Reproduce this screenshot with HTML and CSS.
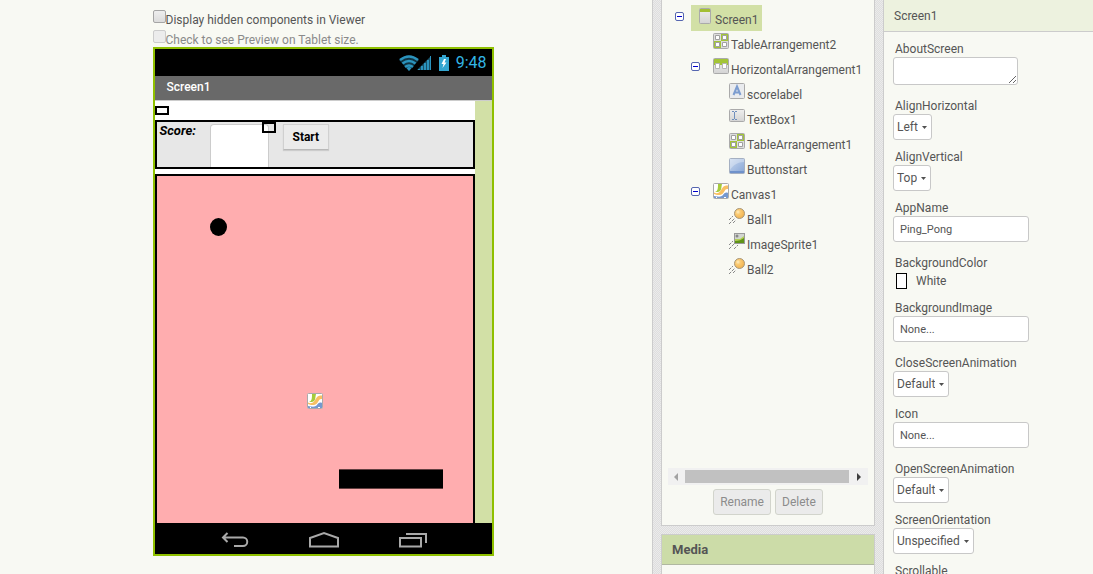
FILE: index.html
```html
<!DOCTYPE html>
<html lang="en">
<head>
  <meta charset="UTF-8" />
  <meta name="viewport" content="width=device-width, initial-scale=1.0" />
  <title>Ping_Pong - Designer</title>
  <link rel="stylesheet" href="styles.css">
</head>
<body>
  <!-- component icons, used by the tree and the canvas -->
  <svg class="sprite" aria-hidden="true">
    <defs>
      <linearGradient id="grey" x1="0" y1="0" x2="0" y2="1"><stop offset="0" stop-color="#eee"/><stop offset="1" stop-color="#d4d4d4"/></linearGradient>
      <linearGradient id="blue" x1="0" y1="0" x2="1" y2="1"><stop offset="0" stop-color="#c8d8ee"/><stop offset="1" stop-color="#86a5d6"/></linearGradient>
      <radialGradient id="orange" cx=".35" cy=".35" r=".7"><stop offset="0" stop-color="#ffeec0"/><stop offset=".35" stop-color="#fbcb73"/><stop offset="1" stop-color="#f0b04c"/></radialGradient>
    </defs>
    <symbol id="i-screen" viewBox="0 0 16 16">
      <rect x="2.5" y=".5" width="11" height="15" rx="1" fill="url(#grey)" stroke="#aaa"/>
      <path d="M3 1h10v3H3z" fill="#a3bf35"/>
    </symbol>
    <symbol id="i-table" viewBox="0 0 16 16">
      <rect x=".5" y=".5" width="15" height="15" rx="1" fill="#ddd" stroke="#aaa"/>
      <path d="M8 1h7v7H8zM1 8h7v7H1z" fill="#a3c537"/>
      <g fill="#fff" stroke="#a0a0a0"><path d="M2.500 2.500h4v4h-4zM9.500 2.500h4v4h-4zM2.500 9.500h4v4h-4zM9.500 9.500h4v4h-4z"/></g>
    </symbol>
    <symbol id="i-horizontal" viewBox="0 0 16 16">
      <rect x=".5" y=".5" width="15" height="15" rx="1" fill="url(#grey)" stroke="#aaa"/>
      <path d="M1 1h14v6H1z" fill="#a3c537"/>
      <path d="M2.500 5.500h4v5h-4zM9.500 5.500h4v5h-4z" fill="#fff" stroke="#b5b5b5"/>
    </symbol>
    <symbol id="i-label" viewBox="0 0 16 16">
      <rect x=".5" y=".5" width="15" height="15" rx="1" fill="#e9ebee" stroke="#aaa"/>
      <path d="M4.500 12 8 3.500 11.500 12M6 9.500h4" fill="none" stroke="#7d9dd0" stroke-width="2"/>
    </symbol>
    <symbol id="i-textbox" viewBox="0 0 16 16">
      <rect x=".5" y="1.500" width="15" height="12" rx="1" fill="url(#grey)" stroke="#aaa"/>
      <path d="M3 3.500h2M6 3.500h2M3 11.500h2M6 11.500h2M5.500 4v7" fill="none" stroke="#6f8fbd"/>
    </symbol>
    <symbol id="i-button" viewBox="0 0 16 16">
      <rect x=".5" y=".5" width="15" height="15" rx="1" fill="url(#blue)" stroke="#a5b0c2"/>
      <path d="M1 1h14v3C9 4 4 7 1 12z" fill="#fff" opacity=".3"/>
      <path d="M1 13h14v2H1z" fill="#6f92cb"/>
    </symbol>
    <symbol id="i-canvas" viewBox="0 0 16 16">
      <rect x=".5" y=".5" width="15" height="15" rx="1" fill="#fff" stroke="#aaa"/>
      <path d="M5 1h4c-1 4 0 7-4 8H2c3-1 3-4 3-8z" fill="#a6cb3c"/>
      <path d="M1 9.500c5 2 6-1 8-4s3-3 6-3v3.500c-4-1-3 5-8 6-2 0-4 0-6-1z" fill="#f8c063"/>
      <path d="M1 15v-2c5 1 7 1 9-1 1-2 3-3 5-2v5z" fill="#7598cf"/>
      <path d="M3 14h1v1H3zM11 14h2v1h-2z" fill="#fff"/>
    </symbol>
    <symbol id="i-ball" viewBox="0 0 16 16">
      <path d="m0 12 4-4M0 16l6-6M4 15l3-3" stroke="#888" stroke-dasharray="3 1" fill="none"/>
      <circle cx="10.500" cy="5.500" r="5" fill="url(#orange)" stroke="#a6977b"/>
    </symbol>
    <symbol id="i-sprite" viewBox="0 0 16 16">
      <path d="m0 12 4-4M0 16l6-6M5 16l4-4" stroke="#888" stroke-dasharray="3 1" fill="none"/>
      <rect x="5.500" y=".5" width="10" height="10" fill="#b3cf57" stroke="#999"/>
      <path d="M6 1h9v2l-4 3H6z" fill="#d2d6cf"/>
      <path d="M6 8c4 0 6-1 9-3v5H6z" fill="#5f9417"/>
      <circle cx="8" cy="3" r="1.500" fill="#888"/>
    </symbol>
  </svg>

  <div class="designer">
    <main class="viewer">
      <div class="viewer-inner">
        <label class="check"><input type="checkbox">Display hidden components in Viewer</label>
        <label class="check disabled"><input type="checkbox" disabled>Check to see Preview on Tablet size.</label>

        <div class="phone">
          <div class="status-bar">
            <svg width="33" height="16" viewBox="0 0 33 16" aria-hidden="true">
              <path d="M0 5q10-9 20 0l-10 11z" fill="#2b93bd" opacity=".35"/>
              <g fill="none" stroke="#2b93bd" stroke-width="2.500">
                <path d="M1 5q9-7 18 0M3.500 8.500q6.500-5 13 0M6 12q4-3 8 0"/>
              </g>
              <path d="M7.500 13q2.500-2 5 0L10 16z" fill="#2b93bd"/>
              <path d="M19 15v-1h2v1zM22 15v-4h2v4zM25 15V8h2v7zM28 15V5h2v10zM31 15V1h1v14z" fill="#2b93bd"/>
              <path d="M18 15 32 1v14z" fill="#2b93bd" opacity=".55"/>
            </svg>
            <svg width="10" height="16" viewBox="0 0 10 16" aria-hidden="true">
              <path d="M3 0h4v2h3v14H0V2h3z" fill="#33a5d0"/>
              <path d="M5 4 2.500 9h2L3.500 13 7.500 7.500h-2L7 4z" fill="#fff"/>
            </svg>
            <span>9:48</span>
          </div>
          <div class="title-bar">Screen1</div>
          <div class="screen">
            <div class="form">
              <div class="empty-table"></div>
              <div class="arrangement">
                <label class="score" for="score-box">Score:</label>
                <div class="score-box">
                  <input id="score-box" type="text">
                  <div class="empty-table overlay"></div>
                </div>
                <button class="start">Start</button>
              </div>
              <div class="canvas">
                <div class="ball"></div>
                <svg class="canvas-icon" width="16" height="16"><use href="#i-canvas"/></svg>
                <div class="paddle"></div>
              </div>
            </div>
          </div>
          <div class="nav-bar">
            <svg width="28" height="18" viewBox="0 0 28 18" fill="none" stroke="#a9a9a9" stroke-width="2"><path d="M6.500 2 2 6.500 6.500 11M2 6.500h20a4.200 4.200 0 0 1 0 8.500h-9"/></svg>
            <svg width="30" height="18" viewBox="0 0 30 18" fill="none" stroke="#a9a9a9" stroke-width="2"><path d="M1 15.500V7l14-5 14 5v8.500z"/></svg>
            <svg width="28" height="18" viewBox="0 0 28 18" fill="none" stroke="#a9a9a9" stroke-width="2"><path d="M1 7h21v8.500H1zM7 3h20v9"/></svg>
          </div>
        </div>
      </div>
    </main>

    <div class="middle">
      <section class="panel components">
        <ul class="tree">
          <li>
            <div class="node"><button class="toggle" aria-label="Collapse Screen1"></button><a class="selected" href="#"><svg><use href="#i-screen"/></svg>Screen1</a></div>
            <ul>
              <li><div class="node"><a href="#"><svg><use href="#i-table"/></svg>TableArrangement2</a></div></li>
              <li>
                <div class="node"><button class="toggle" aria-label="Collapse HorizontalArrangement1"></button><a href="#"><svg><use href="#i-horizontal"/></svg>HorizontalArrangement1</a></div>
                <ul>
                  <li><div class="node"><a href="#"><svg><use href="#i-label"/></svg>scorelabel</a></div></li>
                  <li><div class="node"><a href="#"><svg><use href="#i-textbox"/></svg>TextBox1</a></div></li>
                  <li><div class="node"><a href="#"><svg><use href="#i-table"/></svg>TableArrangement1</a></div></li>
                  <li><div class="node"><a href="#"><svg><use href="#i-button"/></svg>Buttonstart</a></div></li>
                </ul>
              </li>
              <li>
                <div class="node"><button class="toggle" aria-label="Collapse Canvas1"></button><a href="#"><svg><use href="#i-canvas"/></svg>Canvas1</a></div>
                <ul>
                  <li><div class="node"><a href="#"><svg><use href="#i-ball"/></svg>Ball1</a></div></li>
                  <li><div class="node"><a href="#"><svg><use href="#i-sprite"/></svg>ImageSprite1</a></div></li>
                  <li><div class="node"><a href="#"><svg><use href="#i-ball"/></svg>Ball2</a></div></li>
                </ul>
              </li>
            </ul>
          </li>
        </ul>
        <div class="scrollbar">
          <span class="arrow left"></span>
          <span class="thumb"></span>
          <span class="arrow right"></span>
        </div>
        <div class="actions">
          <button disabled>Rename</button>
          <button disabled>Delete</button>
        </div>
      </section>
      <section class="panel media">
        <h2>Media</h2>
      </section>
    </div>

    <aside class="properties">
      <div class="properties-title">Screen1</div>
      <form>
        <div class="field wide">
          <label for="about">AboutScreen</label>
          <textarea id="about"></textarea>
        </div>
        <div class="field">
          <label for="align-h">AlignHorizontal</label>
          <select id="align-h"><option>Left</option><option>Right</option><option>Center</option></select>
        </div>
        <div class="field">
          <label for="align-v">AlignVertical</label>
          <select id="align-v"><option>Top</option><option>Center</option><option>Bottom</option></select>
        </div>
        <div class="field wide">
          <label for="app-name">AppName</label>
          <input id="app-name" type="text" value="Ping_Pong">
        </div>
        <div class="field">
          <label for="bg-color">BackgroundColor</label>
          <button id="bg-color" class="color" type="button"><span class="swatch"></span>White</button>
        </div>
        <div class="field wide">
          <label for="bg-image">BackgroundImage</label>
          <input id="bg-image" type="text" value="None..." readonly>
        </div>
        <div class="field">
          <label for="close-anim">CloseScreenAnimation</label>
          <select id="close-anim"><option>Default</option><option>Fade</option><option>Zoom</option></select>
        </div>
        <div class="field wide">
          <label for="icon">Icon</label>
          <input id="icon" type="text" value="None..." readonly>
        </div>
        <div class="field">
          <label for="open-anim">OpenScreenAnimation</label>
          <select id="open-anim"><option>Default</option><option>Fade</option><option>Zoom</option></select>
        </div>
        <div class="field">
          <label for="orientation">ScreenOrientation</label>
          <select id="orientation"><option>Unspecified</option><option>Portrait</option><option>Landscape</option></select>
        </div>
        <div class="field">
          <label for="scrollable">Scrollable</label>
          <input id="scrollable" type="checkbox">
        </div>
      </form>
    </aside>
  </div>
</body>
</html>
```
FILE: styles.css
```css
* {
  box-sizing: border-box;
}
body {
  margin: 0;
  font-family: Roboto, "Liberation Sans", sans-serif;
  font-size: 12px;
  line-height: 16px;
  color: #555;
  background: #f8f9f3;
}
button, input, select, textarea {
  font: inherit;
  color: inherit;
  margin: 0;
}
.sprite {
  position: absolute;
  width: 0;
  height: 0;
}
.designer {
  display: grid;
  grid-template-columns: minmax(0, 1fr) 214px 210px;
  gap: 8px;
  height: 100vh;
  overflow: hidden;
  background: repeating-conic-gradient(#dedede 0 25%, #ebebeb 0 50%) 0 0 / 2px 2px;
}

/* viewer */
.viewer {
  display: flex;
  justify-content: center;
  padding: 10px 6px 0 0;
  background: #f8f9f3;
  border-right: 1px solid #ccc;
}
.check {
  display: flex;
  height: 20px;
  line-height: 20px;
}
.check input {
  appearance: none;
  width: 13px;
  height: 13px;
  border: 1px solid #a5a5a5;
  border-radius: 2px;
  background: linear-gradient(#eee, #dcdcdc);
}
.check.disabled {
  height: 17px;
  color: #8a8a8a;
}
.check.disabled input {
  border-color: #ccc;
  background: #ececec;
}
.phone {
  width: 341px;
  border: 2px solid #8fc000;
  background: #000;
}
.status-bar {
  display: flex;
  justify-content: flex-end;
  align-items: center;
  gap: 7px;
  height: 27px;
  padding-right: 5px;
  font-size: 16px;
  color: #33b5e5;
}
.title-bar {
  height: 25px;
  padding: 3px 12px;
  border-bottom: 1px solid #ccc;
  background: #696969;
  color: #fff;
  font-weight: 500;
}
.screen {
  display: flex;
  height: 422px;
  padding-right: 17px;
  background: #d2e0a6;
}
.form {
  flex: 1;
  display: flex;
  flex-direction: column;
  padding-top: 5px;
  gap: 5px;
  background: #fff;
}
.empty-table {
  width: 14px;
  height: 9px;
  border: 2px solid #000;
}
.arrangement {
  display: flex;
  align-items: flex-start;
  height: 49px;
  padding: 2px 3px 0;
  border: 2px solid #000;
  background: #e7e7e7;
  color: #000;
  font-weight: bold;
}
.score {
  width: 50px;
  font-size: 13px;
  line-height: 14px;
  font-style: italic;
}
.score-box {
  position: relative;
  width: 59px;
  margin-right: 14px;
}
.score-box input {
  display: block;
  width: 100%;
  height: 43px;
  border: 1px solid #ccc;
  border-bottom: 0;
  border-radius: 4px 4px 0 0;
  background: #fff;
}
.overlay {
  position: absolute;
  top: -2px;
  right: -7px;
  height: 11px;
}
.start {
  height: 26px;
  padding: 0 9px;
  border: 1px solid #d0d0d0;
  border-bottom-color: #b8b8b8;
  background: #ebebeb;
  box-shadow: 0 1px 1px #ccc;
}
.canvas {
  position: relative;
  flex: 1;
  border: 2px solid #000;
  border-bottom: 0;
  background: #ffadaf;
}
/* items placed on the game canvas */
.ball {
  position: absolute;
  left: 53px;
  top: 42px;
  width: 17px;
  height: 18px;
  border-radius: 50%;
  background: #000;
}
.canvas-icon {
  position: absolute;
  left: 150px;
  top: 217px;
}
.paddle {
  position: absolute;
  left: 182px;
  top: 293px;
  width: 104px;
  height: 20px;
  border: solid #613f40;
  border-width: 1px 0;
  background: #000;
}
.nav-bar {
  display: flex;
  justify-content: space-between;
  align-items: center;
  height: 31px;
  padding: 3px 65px 0 66px;
}

/* components */
.middle {
  display: flex;
  flex-direction: column;
  gap: 8px;
}
.panel {
  background: #f8f9f3;
  border: 1px solid #ccc;
}
.components {
  padding: 5px 6px 10px;
  border-top: 0;
}
.tree {
  min-height: 463px;
}
.tree, .tree ul {
  margin: 0;
  padding: 0;
  list-style: none;
}
.tree ul {
  padding-left: 16px;
}
.node {
  display: flex;
  height: 25px;
  padding-left: 23px;
}
.node a {
  display: flex;
  gap: 2px;
  height: 26px;
  padding: 3px 4px 0 6px;
  line-height: 24px;
  color: inherit;
  text-decoration: none;
}
.node a.selected {
  background: #d2e0a6;
}
.node svg {
  width: 16px;
  height: 16px;
}
.toggle {
  width: 9px;
  height: 9px;
  margin: 7px 7px 0 -16px;
  padding: 0;
  border: 1px solid #5666b0;
  border-radius: 2px;
  background: linear-gradient(#00c, #00c) center / 5px 1px no-repeat #fff;
}
.scrollbar {
  display: flex;
  align-items: center;
  justify-content: space-between;
  height: 17px;
  padding: 0 7px 0 6px;
  background: #f1f1f1;
}
.thumb {
  flex: 1;
  height: 13px;
  margin: 0 8px 0 7px;
  background: #c1c1c1;
}
.arrow {
  border: 4px solid transparent;
}
.arrow.left {
  border-left: 0;
  border-right-color: #a3a3a3;
}
.arrow.right {
  border-right: 0;
  border-left-color: #404040;
}
.actions {
  display: flex;
  justify-content: center;
  gap: 4px;
  padding-top: 4px;
}
.actions button {
  height: 26px;
  padding: 0 6px;
  border: 1px solid #d2d4cc;
  border-radius: 3px;
  background: #ebebeb;
  color: #8c8c8c;
}
.media {
  flex: 1;
}
.media h2 {
  margin: 0;
  padding: 7px 10px 6px;
  border-bottom: 1px solid #b0b8a0;
  background: #ccdca8;
  font-size: 13px;
  font-weight: bold;
}

/* properties */
.properties {
  border-left: 1px solid #ccc;
  background: #f8f9f3;
}
.properties-title {
  height: 32px;
  padding: 8px 10px;
  border-bottom: 1px solid #ccc;
  background: #edf2df;
}
.properties form {
  padding: 9px;
}
.field {
  display: flex;
  flex-direction: column;
  align-items: flex-start;
  margin-bottom: 9px;
}
.field.wide {
  margin-bottom: 13px;
}
.field label {
  padding-left: 2px;
}
.field input[type="text"], .field textarea, .field select {
  height: 26px;
  border: 1px solid #c8c8c8;
  border-radius: 3px;
  background-color: #fff;
}
.field input[type="text"] {
  width: 136px;
  padding: 0 6px;
  font-size: 11px;
}
.field textarea {
  width: 125px;
  height: 28px;
}
.field select {
  appearance: none;
  field-sizing: content;
  padding: 0 13px 0 3px;
  background-image: url("data:image/svg+xml,%3Csvg xmlns='http://www.w3.org/2000/svg' width='5' height='3'%3E%3Cpath d='M0 0h5L2.500 3z' fill='%23505050'/%3E%3C/svg%3E");
  background-repeat: no-repeat;
  background-position: right 4px center;
}
.color {
  display: flex;
  align-items: center;
  gap: 9px;
  height: 20px;
  padding: 0 3px;
  border: 0;
  background: none;
}
.swatch {
  width: 11px;
  height: 16px;
  border: 1px solid #000;
  background: #fff;
}
```
